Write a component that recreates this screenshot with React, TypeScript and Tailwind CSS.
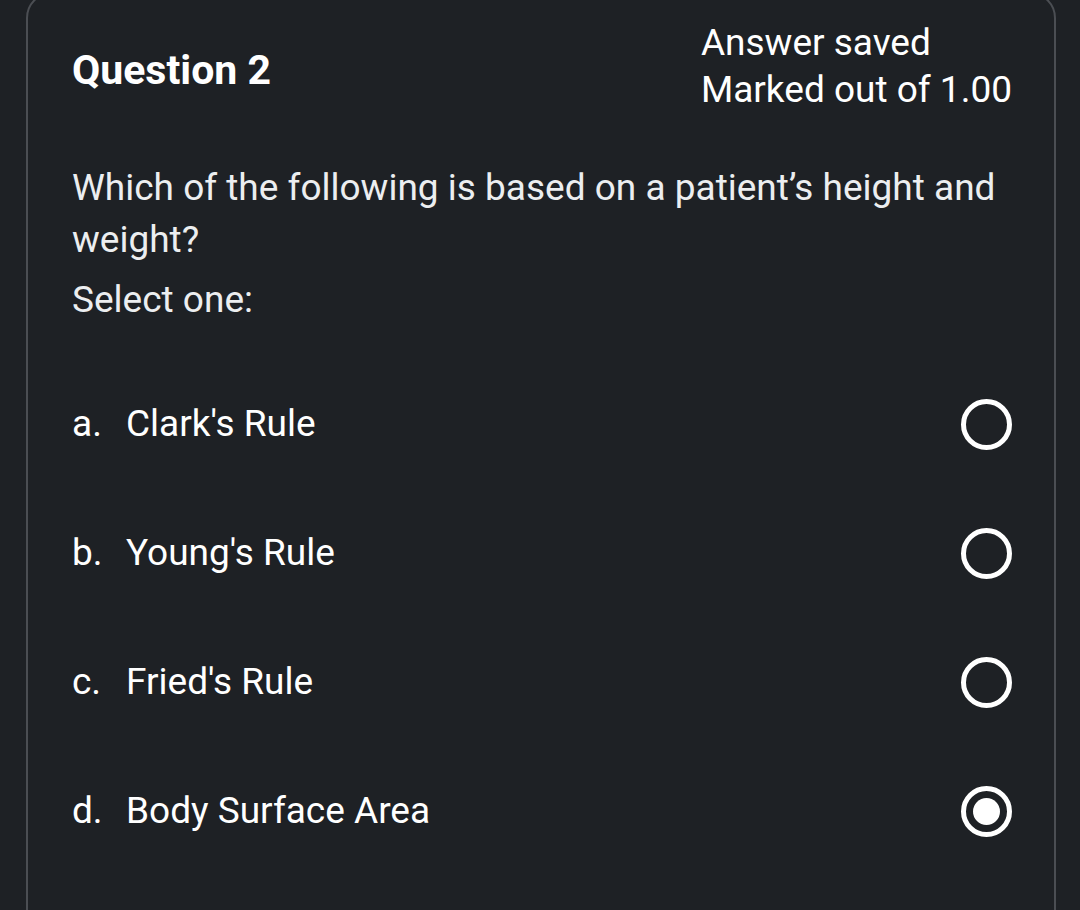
const OPTIONS = [
  { key: 'a.', label: "Clark's Rule", checked: false },
  { key: 'b.', label: "Young's Rule", checked: false },
  { key: 'c.', label: "Fried's Rule", checked: false },
  { key: 'd.', label: 'Body Surface Area', checked: true },
]

function Radio({ checked }: { checked: boolean }) {
  return (
    <span className="w-[51px] h-[51px] rounded-full border-[5px] border-white flex items-center justify-center flex-shrink-0">
      {checked && <span className="w-[27px] h-[27px] rounded-full bg-white" />}
    </span>
  )
}

export default function App() {
  return (
    <div
      className="w-[1080px] h-[910px] overflow-hidden bg-[#1e2125] text-[#eceef0]"
      style={{ fontFamily: 'Roboto, "Noto Sans", sans-serif' }}
    >
      <div className="ml-[26px] mr-[24px] -mt-[8px] h-[960px] rounded-[26px] border-2 border-[#4b4e53] pl-[44px] pr-[42px] pt-[25px]">
        {/* Header */}
        <div className="flex justify-between items-center">
          <h2 className="text-[41px] font-bold text-white leading-none mt-[8px]">Question 2</h2>
          <div className="text-[37px] leading-[47px] text-white">
            <p>Answer saved</p>
            <p>Marked out of 1.00</p>
          </div>
        </div>

        {/* Question */}
        <div className="mt-[49px] text-[37px] leading-[52px]">
          <p>Which of the following is based on a patient’s height and weight?</p>
          <p className="mt-[8px]">Select one:</p>
        </div>

        {/* Options */}
        <div className="mt-[72px] flex flex-col gap-[77px]">
          {OPTIONS.map(opt => (
            <div key={opt.key} className="flex items-center justify-between h-[52px]">
              <div className="flex items-center text-[37px] text-white">
                <span className="w-[54px]">{opt.key}</span>
                <span>{opt.label}</span>
              </div>
              <Radio checked={opt.checked} />
            </div>
          ))}
        </div>
      </div>
    </div>
  )
}
